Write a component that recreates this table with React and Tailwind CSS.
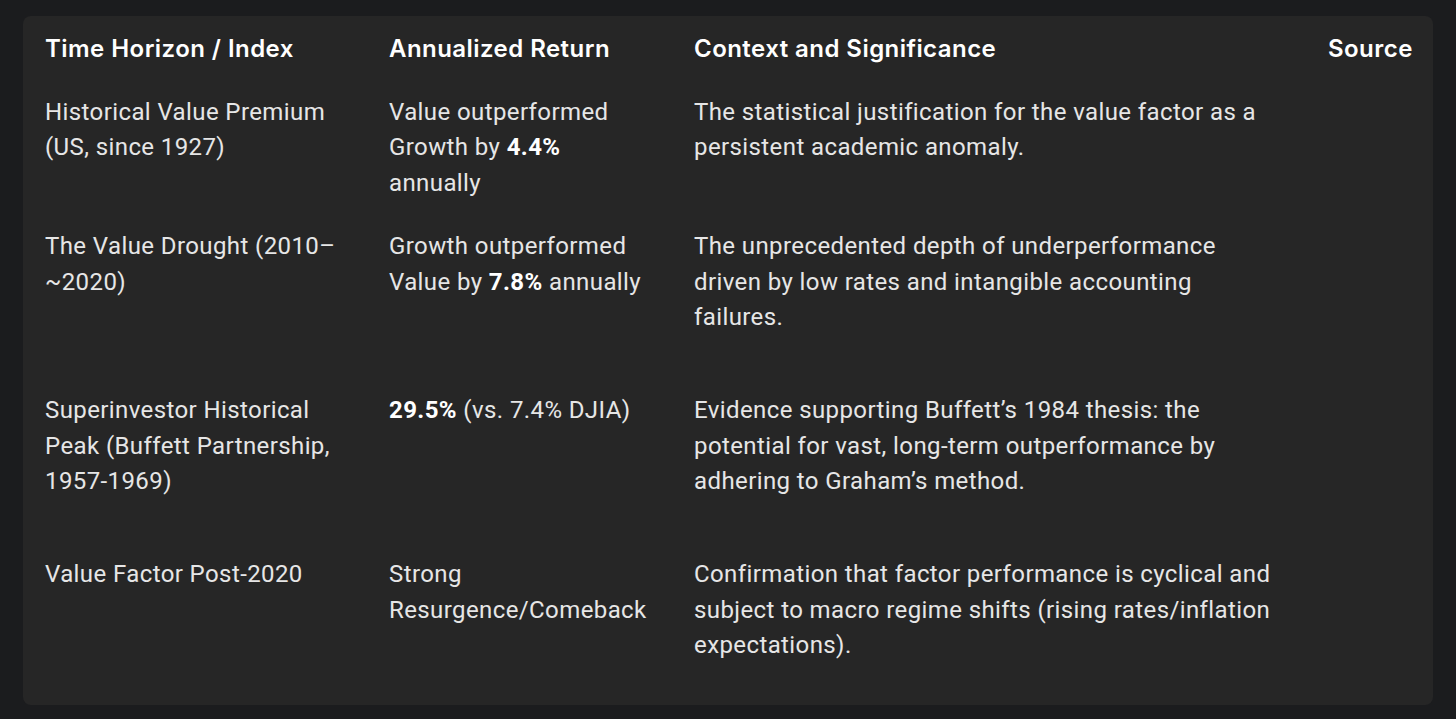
const rows = [
  {
    index: ['Historical Value Premium', '(US, since 1927)'],
    ret: [
      <>Value outperformed</>,
      <>
        Growth by <b className="font-bold text-white">4.4%</b>
      </>,
      <>annually</>,
    ],
    ctx: ['The statistical justification for the value factor as a', 'persistent academic anomaly.'],
    extra: false,
  },
  {
    index: ['The Value Drought (2010–', '~2020)'],
    ret: [
      <>Growth outperformed</>,
      <>
        Value by <b className="font-bold text-white">7.8%</b> annually
      </>,
    ],
    ctx: [
      'The unprecedented depth of underperformance',
      'driven by low rates and intangible accounting',
      'failures.',
    ],
    extra: true,
  },
  {
    index: ['Superinvestor Historical', 'Peak (Buffett Partnership,', '1957-1969)'],
    ret: [
      <>
        <b className="font-bold text-white">29.5%</b> (vs. 7.4% DJIA)
      </>,
    ],
    ctx: [
      'Evidence supporting Buffett’s 1984 thesis: the',
      'potential for vast, long-term outperformance by',
      'adhering to Graham’s method.',
    ],
    extra: true,
  },
  {
    index: ['Value Factor Post-2020'],
    ret: [<>Strong</>, <>Resurgence/Comeback</>],
    ctx: [
      'Confirmation that factor performance is cyclical and',
      'subject to macro regime shifts (rising rates/inflation',
      'expectations).',
    ],
    extra: false,
  },
]

const Lines = ({ items }) => (
  <>
    {items.map((t, i) => (
      <div key={i} className="whitespace-nowrap">
        {t}
      </div>
    ))}
  </>
)

export default function App() {
  const cell = 'py-[14px]'
  const head = 'py-[14px] font-semibold text-white tracking-[0.45px] font-[Inter,Roboto,sans-serif]'
  return (
    <div
      className="min-h-screen bg-[#1b1c1e] pt-[16px] pl-[23px] pr-[23px] pb-[14px]"
      style={{ fontFamily: 'Roboto, "Noto Sans", sans-serif' }}
    >
      <div className="rounded-lg bg-[#262626] px-[22px] pt-px pb-[27px] text-[24px] leading-[35.5px] tracking-[0.4px] text-[#e6e6e6]">
        <div className="grid grid-cols-[344px_305px_634px_1fr]">
          <div className={head}>Time Horizon / Index</div>
          <div className={head}>Annualized Return</div>
          <div className={head}>Context and Significance</div>
          <div className={`${head} text-right`}>Source</div>

          {rows.map((r, i) => {
            const c = r.extra ? 'pt-[14px] pb-[43.5px]' : cell
            return (
              <div key={i} className="contents">
                <div className={c}>
                  <Lines items={r.index} />
                </div>
                <div className={c}>
                  <Lines items={r.ret} />
                </div>
                <div className={c}>
                  <Lines items={r.ctx} />
                </div>
                <div className={c}></div>
              </div>
            )
          })}
        </div>
      </div>
    </div>
  )
}
